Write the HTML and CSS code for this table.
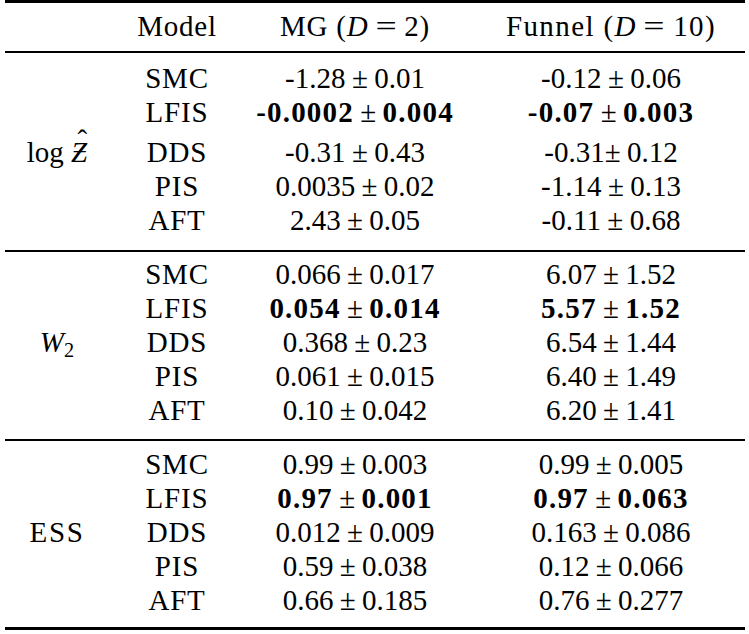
FILE: index.html
```html
<!DOCTYPE html>
<html>
<head>
<meta charset="utf-8">
<link rel="stylesheet" href="styles.css">
</head>
<body>
<table class="results">
  <colgroup>
    <col class="c-metric">
    <col class="c-model">
    <col class="c-mg">
    <col class="c-funnel">
  </colgroup>
  <thead>
    <tr>
      <th></th>
      <th class="lbl">Model</th>
      <th class="lbl">MG (<i>D</i><span class="eq">=</span>2)</th>
      <th class="lbl funnel wide">Funnel (<i>D</i><span class="eq">=</span>10)</th>
    </tr>
  </thead>
  <tbody class="sec sec-first">
    <tr class="first"><td></td><td class="lbl">SMC</td><td>-1.28<span class="pm">±</span>0.01</td><td class="funnel">-0.12<span class="pm">±</span>0.06</td></tr>
    <tr><td></td><td class="lbl">LFIS</td><td><b>-0.0002</b><span class="pm">±</span><b>0.004</b></td><td class="funnel"><b>-0.07</b><span class="pm">±</span><b>0.003</b></td></tr>
    <tr class="tall"><td class="metric">log <span class="hat">Ƶ</span></td><td class="lbl">DDS</td><td>-0.31<span class="pm">±</span>0.43</td><td class="funnel">-0.31<span class="pm tight">±</span>0.12</td></tr>
    <tr><td></td><td class="lbl">PIS</td><td>0.0035<span class="pm">±</span>0.02</td><td class="funnel">-1.14<span class="pm">±</span>0.13</td></tr>
    <tr class="last"><td></td><td class="lbl">AFT</td><td>2.43<span class="pm">±</span>0.05</td><td class="funnel">-0.11<span class="pm">±</span>0.68</td></tr>
  </tbody>
  <tbody class="sec sec-mid">
    <tr class="first"><td></td><td class="lbl">SMC</td><td>0.066<span class="pm">±</span>0.017</td><td class="funnel">6.07<span class="pm">±</span>1.52</td></tr>
    <tr><td></td><td class="lbl">LFIS</td><td><b>0.054</b><span class="pm">±</span><b>0.014</b></td><td class="funnel"><b>5.57</b><span class="pm">±</span><b>1.52</b></td></tr>
    <tr><td class="metric metric-w"><i>W</i><sub>2</sub></td><td class="lbl">DDS</td><td>0.368<span class="pm">±</span>0.23</td><td class="funnel">6.54<span class="pm">±</span>1.44</td></tr>
    <tr><td></td><td class="lbl">PIS</td><td>0.061<span class="pm">±</span>0.015</td><td class="funnel">6.40<span class="pm">±</span>1.49</td></tr>
    <tr class="last"><td></td><td class="lbl">AFT</td><td>0.10<span class="pm">±</span>0.042</td><td class="funnel">6.20<span class="pm">±</span>1.41</td></tr>
  </tbody>
  <tbody class="sec sec-last">
    <tr class="first"><td></td><td class="lbl">SMC</td><td>0.99<span class="pm">±</span>0.003</td><td class="funnel">0.99<span class="pm">±</span>0.005</td></tr>
    <tr><td></td><td class="lbl">LFIS</td><td><b>0.97</b><span class="pm">±</span><b>0.001</b></td><td class="funnel"><b>0.97</b><span class="pm">±</span><b>0.063</b></td></tr>
    <tr><td class="metric lbl ess">ESS</td><td class="lbl">DDS</td><td>0.012<span class="pm">±</span>0.009</td><td class="funnel">0.163<span class="pm">±</span>0.086</td></tr>
    <tr><td></td><td class="lbl">PIS</td><td>0.59<span class="pm">±</span>0.038</td><td class="funnel">0.12<span class="pm">±</span>0.066</td></tr>
    <tr class="last"><td></td><td class="lbl">AFT</td><td>0.66<span class="pm">±</span>0.185</td><td class="funnel">0.76<span class="pm">±</span>0.277</td></tr>
  </tbody>
</table>
</body>
</html>
```
FILE: styles.css
```css
html, body {
  margin: 0;
  padding: 0;
  background: #ffffff;
}

body {
  padding: 0 4px 0 5px;
  font-family: "Liberation Serif", "Times New Roman", serif;
  font-size: 29px;
  color: #000000;
}

.results {
  border-collapse: collapse;
  width: 740px;
  table-layout: fixed;
  border-top: 3px solid #000;
  border-bottom: 3px solid #000;
}

.c-metric { width: 104px; }
.c-model { width: 136px; }
.c-mg { width: 220px; }
.c-funnel { width: 280px; }

.results th,
.results td {
  padding: 0;
  text-align: center;
  vertical-align: bottom;
  font-weight: normal;
  line-height: 34px;
  height: 34px;
  white-space: nowrap;
}

.results th.funnel,
.results td.funnel {
  padding-left: 12px;
}

.lbl {
  letter-spacing: 0.8px;
}

.lbl.wide {
  letter-spacing: 1.4px;
}

.lbl.ess {
  letter-spacing: 1.6px;
}

.metric-w {
  padding-right: 8px;
}

.eq {
  display: inline-block;
  margin: 0 0.32em;
  transform: scaleX(1.3);
}

.pm {
  display: inline-block;
  margin: 0 0.22em;
}

.pm.tight {
  margin-left: 0;
}

.results thead th {
  padding-top: 6px;
  padding-bottom: 8px;
}

.results thead {
  border-bottom: 2px solid #000;
}

.sec + .sec {
  border-top: 2px solid #000;
}

.sec tr.first td {
  padding-top: 8px;
}

.sec tr.last td {
  padding-bottom: 10px;
}

.sec-first tr.last td {
  padding-bottom: 13px;
}

.sec-mid tr.first td {
  padding-top: 5px;
}

.sec-mid tr.last td {
  padding-bottom: 12px;
}

.sec-last tr.first td {
  padding-top: 6px;
}

.sec-first tr.tall td {
  height: 40px;
}

.results b {
  font-weight: bold;
  letter-spacing: 1.2px;
}

.hat {
  position: relative;
  display: inline-block;
  font-style: italic;
}

.hat::before {
  content: "\02C6";
  position: absolute;
  left: 0.22em;
  top: -0.4em;
  font-style: normal;
}

sub {
  font-size: 0.7em;
  vertical-align: -0.25em;
  line-height: 0;
}
```
